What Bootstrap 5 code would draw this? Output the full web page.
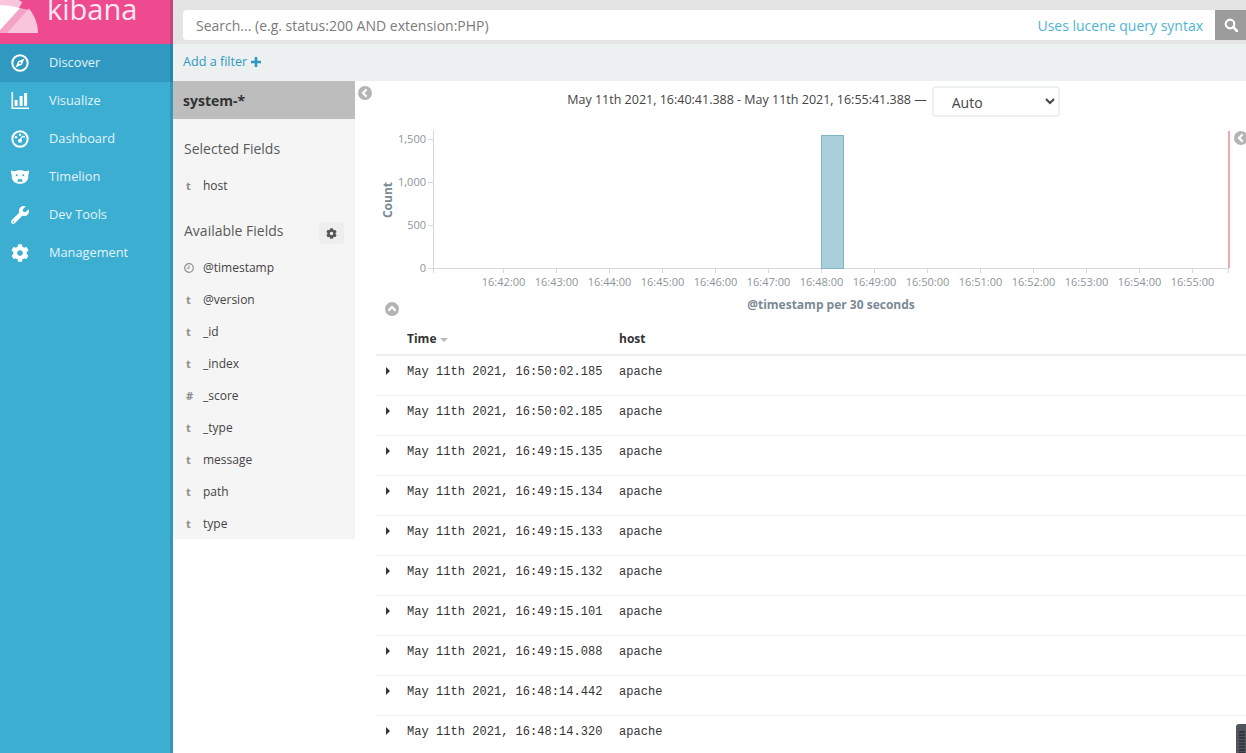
<!DOCTYPE html>
<html lang="en">
<head>
<meta charset="utf-8">
<title>Kibana Discover</title>
<link rel="stylesheet" href="https://cdn.jsdelivr.net/npm/bootstrap@5.3.0/dist/css/bootstrap.min.css">
<style>
html,body{height:753px;overflow:hidden}
body{font-family:"Open Sans",sans-serif;font-size:12px;color:#444;background:#fff}
.shell{height:753px}
.side-nav{width:173px;background:#3caed2;position:relative}
.side-nav::after{content:"";position:absolute;top:0;right:0;bottom:0;width:3px;background:rgba(0,40,60,.16)}
.brand-bar{height:44px;background:#ee4a8f;overflow:hidden;position:relative}
.brand-mark{position:absolute;left:0;top:0}
.brand-name{position:absolute;left:47px;top:-11px;font-size:29px;line-height:40px;color:#fde8f1;font-weight:500}
.nav-entry{height:38px;color:#e2f4fa;font-size:12.8px;padding-left:11px;text-decoration:none}
.nav-entry.on{background:#2f99c1}
.nav-entry svg{width:18px;height:18px;flex:none;margin-right:20px}
.main-area{min-width:0}
.query-bar{height:44px;background:#e4e4e4;padding:10px 0 4px 10px}
.query-field{background:#fff;border-radius:4px 0 0 4px;height:30px;padding:0 12px 0 13px;font-size:14px;color:#7b7b7b}
.query-hint{color:#4fb3d6}
.query-btn{width:31px;height:30px;background:#9c9c9c}
.filter-bar{height:37px;background:#ecf0f1;padding:0 0 1px 10px;color:#2f99c1;font-size:12.6px;gap:4px}
.fields-col{width:182px;flex:none}
.pattern-head{height:38px;background:#bdbdbd;padding-left:10px;font-size:14px;font-weight:700;color:#333}
.fields-box{background:#f5f5f5;height:420px}
.group-title{font-size:14px;color:#5a5a5a;padding-left:11px}
.title-one{height:51px;padding-top:19px}
.title-two{height:50px;padding-right:11px;padding-top:6px}
.gear-btn{width:25px;height:22px;background:#eee;border-radius:4px;color:#555;margin-top:6px}
.field-line{height:32px;padding-left:11px;color:#444}
.type-mark{width:19px;color:#8f8f8f;font-weight:700;font-size:11px;padding-left:2px}
.clock-mark{padding-left:0}
.results-col{min-width:0;position:relative}
.collapse-left{position:absolute;left:3px;top:5px}
.time-row{height:41px;padding:5px 0 0 26px;gap:5px;font-size:12.5px;color:#444}
.time-text{padding-top:5px}
.interval-pick{width:128px;height:31px;border:2px solid #ecf0f1;border-radius:4px;font-size:14px;padding:2px 5px 0 14px;color:#444;background:#fff;font-family:inherit}
.chart-wrap{height:201px;position:relative}
.chart-wrap svg{display:block}
.chart-wrap text{font-family:"Open Sans",sans-serif}
.collapse-up{position:absolute;left:30px;top:180px}
.doc-table{margin:0 0 0 21px;width:870px;font-size:12px;table-layout:fixed;border-collapse:collapse}
.doc-table th{height:32px;padding:0;font-weight:700;color:#333;border-bottom:2px solid #ecf0f1;vertical-align:middle;font-size:12px}
.doc-table td{height:40px;padding:8px 0 0;border-bottom:1px solid #ecf0f1;vertical-align:top;line-height:16px;color:#333}
.col-arrow{width:31px}
.col-time{width:212px}
.mono-cell{font-family:"Liberation Mono",monospace;font-size:12px;letter-spacing:.04px}
.arrow-mark{display:block;margin:3px 0 0 9px}
.sort-mark{display:inline-block;margin-left:4px;border:4px solid transparent;border-top:4px solid #b4bcc2;border-bottom:0;vertical-align:1px}
.corner-widget{position:absolute;right:0;bottom:0;width:10px;height:29px;background:#50545e;border-radius:3px 0 0 0;background-image:repeating-linear-gradient(#50545e 0 1px,#33363d 1px 3px);background-size:6px 100%;background-repeat:no-repeat;background-position:3px 6px}
</style>
</head>
<body>
<svg width="0" height="0" class="position-absolute">
<defs>
<symbol id="i-gear" viewBox="0 0 512 512"><path fill="currentColor" d="M487.4 315.7l-42.6-24.6c4.3-23.2 4.3-47 0-70.2l42.6-24.6c4.9-2.8 7.1-8.6 5.5-14-11.1-35.6-30-67.8-54.7-94.6-3.8-4.1-10-5.1-14.8-2.3L380.8 110c-17.9-15.4-38.5-27.3-60.8-35.1V25.8c0-5.6-3.9-10.5-9.4-11.7-36.7-8.2-74.3-7.8-109.2 0-5.5 1.2-9.4 6.1-9.4 11.7V75c-22.2 7.9-42.8 19.8-60.8 35.1L88.7 85.5c-4.9-2.8-11-1.9-14.8 2.3-24.7 26.7-43.6 58.9-54.7 94.6-1.7 5.4.6 11.2 5.5 14L67.3 221c-4.3 23.2-4.3 47 0 70.2l-42.6 24.6c-4.9 2.8-7.1 8.6-5.5 14 11.1 35.6 30 67.8 54.7 94.6 3.8 4.1 10 5.1 14.8 2.3l42.6-24.6c17.9 15.4 38.5 27.3 60.8 35.1v49.2c0 5.6 3.9 10.5 9.4 11.7 36.7 8.2 74.3 7.8 109.2 0 5.5-1.2 9.4-6.1 9.4-11.7v-49.2c22.2-7.9 42.8-19.8 60.8-35.1l42.6 24.6c4.9 2.8 11 1.9 14.8-2.3 24.7-26.7 43.6-58.9 54.7-94.6 1.5-5.5-.7-11.3-5.6-14.1zM256 336c-44.1 0-80-35.9-80-80s35.9-80 80-80 80 35.9 80 80-35.9 80-80 80z"/></symbol>
<symbol id="i-left" viewBox="0 0 14 14"><circle cx="7" cy="7" r="7" fill="#b4b4b4"/><path d="M8.6 3.4 5 7l3.6 3.6" fill="none" stroke="#fff" stroke-width="2.2"/></symbol>
<symbol id="i-up" viewBox="0 0 14 14"><circle cx="7" cy="7" r="7" fill="#b4b4b4"/><path d="M3.4 8.6 7 5l3.6 3.6" fill="none" stroke="#fff" stroke-width="2.2"/></symbol>
<symbol id="i-arrow" viewBox="0 0 6 8"><path d="M1 0l4 4-4 4z" fill="#333"/></symbol>
</defs>
</svg>
<div class="shell d-flex position-relative">
  <nav class="side-nav d-flex flex-column flex-shrink-0">
    <div class="brand-bar flex-shrink-0">
      <svg class="brand-mark" width="40" height="36" viewBox="0 0 40 36">
        <path d="M0 33V-5A38 38 0 0 1 38 33z" fill="#f9c5dc"/>
        <path d="M19 8 24 -1H32L28 10z" fill="#ee4a8f"/>
        <path d="M20 8 27 11 7 33H0V30z" fill="#f5a3c7"/>
        <path d="M0 5Q10 5 20 8L0 30z" fill="#fff"/>
      </svg>
      <span class="brand-name">kibana</span>
    </div>
    <a class="nav-entry on d-flex align-items-center" href="#">
      <svg viewBox="0 0 18 18" class="text-white"><circle cx="9" cy="9" r="7.7" fill="none" stroke="currentColor" stroke-width="2"/><path d="M13.500 4.500 10.800 10.800 4.500 13.500 7.200 7.200z" fill="currentColor"/><circle cx="9" cy="9" r="1" fill="#2f99c1"/></svg>Discover</a>
    <a class="nav-entry d-flex align-items-center" href="#">
      <svg viewBox="0 0 18 18" class="text-white"><path d="M.5 0h1.6v15.4H18V17H.5z" fill="currentColor"/><path d="M4 8h3v6H4zM9 4h3v10H9zM13.5 1h3v13h-3z" fill="currentColor" transform="translate(-.4 0)"/></svg>Visualize</a>
    <a class="nav-entry d-flex align-items-center" href="#">
      <svg viewBox="0 0 18 18" class="text-white"><circle cx="9" cy="9" r="7.7" fill="none" stroke="currentColor" stroke-width="2"/><circle cx="9" cy="4.8" r="1.2" fill="currentColor"/><circle cx="5" cy="7.2" r="1.2" fill="currentColor"/><circle cx="13" cy="6.8" r="1" fill="currentColor"/><circle cx="9" cy="10.8" r="2" fill="currentColor"/><path d="M9 10 11.8 5.8" stroke="currentColor" stroke-width="1.3"/></svg>Dashboard</a>
    <a class="nav-entry d-flex align-items-center" href="#">
      <svg viewBox="0 0 18 18" class="text-white"><path d="M0 2.2C1.5 3 2.6 3.2 4 3.2 5.8 2.4 7.4 2.2 9 2.2s3.2.2 5 1c1.4 0 2.5-.2 4-1 .2 2-.2 3.6-.8 4.800.4 3.2-.6 6-3 7.6-1.600 1-3.400 1.200-5.200 1.200s-3.600-.2-5.200-1.200c-2.400-1.600-3.400-4.400-3-7.600C.2 5.800-.2 4.200 0 2.200z" fill="currentColor"/><circle cx="5.700" cy="7.300" r="1" fill="#3caed2"/><circle cx="12.300" cy="7.300" r="1" fill="#3caed2"/><path d="M6.300 13.800c.3-2.400 1.300-3.400 2.700-3.400s2.400 1 2.700 3.400z" fill="#3caed2"/><path d="M7.800 10.300h2.400L9 11.800z" fill="#fff"/></svg>Timelion</a>
    <a class="nav-entry d-flex align-items-center" href="#">
      <svg viewBox="0 0 512 512" class="text-white"><path fill="currentColor" d="M507.730 109.100c-2.240-9.030-13.540-12.090-20.120-5.510l-74.360 74.360-67.880-11.310-11.310-67.880 74.360-74.360c6.620-6.620 3.430-17.900-5.660-20.160-47.380-11.740-99.550.91-136.580 37.930-39.640 39.640-50.550 97.100-34.050 147.200L18.740 402.760c-24.990 24.990-24.990 65.510 0 90.500 24.990 24.990 65.510 24.990 90.500 0l213.210-213.210c50.120 16.710 107.470 5.680 147.370-34.220 37.070-37.070 49.700-89.320 37.910-136.730zM64 472c-13.250 0-24-10.750-24-24 0-13.260 10.750-24 24-24s24 10.740 24 24c0 13.250-10.750 24-24 24z"/></svg>Dev Tools</a>
    <a class="nav-entry d-flex align-items-center" href="#">
      <svg class="text-white"><use href="#i-gear"/></svg>Management</a>
  </nav>

  <div class="main-area flex-grow-1 d-flex flex-column">
    <div class="query-bar d-flex flex-shrink-0">
      <div class="query-field flex-grow-1 d-flex align-items-center justify-content-between">
        <span>Search... (e.g. status:200 AND extension:PHP)</span>
        <span class="query-hint">Uses lucene query syntax</span>
      </div>
      <div class="query-btn d-flex align-items-center justify-content-center">
        <svg width="14" height="14" viewBox="0 0 14 14"><circle cx="6" cy="6" r="4.300" fill="none" stroke="#fff" stroke-width="2.200"/><path d="M9.200 9.200 13 13" stroke="#fff" stroke-width="2.600" stroke-linecap="round"/></svg>
      </div>
    </div>
    <div class="filter-bar d-flex align-items-center flex-shrink-0">
      <span>Add a filter</span>
      <svg width="10" height="10" viewBox="0 0 10 10"><path d="M3.700 0h2.600v3.700H10v2.600H6.300V10H3.700V6.300H0V3.700h3.700z" fill="#2f99c1"/></svg>
    </div>
    <div class="d-flex flex-grow-1">
      <aside class="fields-col">
        <div class="pattern-head d-flex align-items-center">system-*</div>
        <div class="fields-box">
          <div class="group-title title-one">Selected Fields</div>
          <div class="field-line d-flex align-items-center"><span class="type-mark">t</span>host</div>
          <div class="group-title title-two d-flex align-items-center justify-content-between">
            <span>Available Fields</span>
            <span class="gear-btn d-flex align-items-center justify-content-center"><svg width="11" height="11"><use href="#i-gear"/></svg></span>
          </div>
          <div class="field-line d-flex align-items-center"><span class="type-mark clock-mark"><svg width="10" height="10" viewBox="0 0 10 10" class="d-block"><circle cx="5" cy="5" r="4.300" fill="none" stroke="#8f8f8f" stroke-width="1.200"/><path d="M5 2.500V5.300H2.800" fill="none" stroke="#8f8f8f"/></svg></span>@timestamp</div>
          <div class="field-line d-flex align-items-center"><span class="type-mark">t</span>@version</div>
          <div class="field-line d-flex align-items-center"><span class="type-mark">t</span>_id</div>
          <div class="field-line d-flex align-items-center"><span class="type-mark">t</span>_index</div>
          <div class="field-line d-flex align-items-center"><span class="type-mark">#</span>_score</div>
          <div class="field-line d-flex align-items-center"><span class="type-mark">t</span>_type</div>
          <div class="field-line d-flex align-items-center"><span class="type-mark">t</span>message</div>
          <div class="field-line d-flex align-items-center"><span class="type-mark">t</span>path</div>
          <div class="field-line d-flex align-items-center"><span class="type-mark">t</span>type</div>
        </div>
      </aside>
      <section class="results-col flex-grow-1">
        <svg class="collapse-left" width="14" height="14"><use href="#i-left"/></svg>
        <div class="time-row d-flex justify-content-center align-items-start">
          <span class="time-text">May 11th 2021, 16:40:41.388 - May 11th 2021, 16:55:41.388 —</span>
          <select class="interval-pick"><option>Auto</option></select>
        </div>
        <div class="chart-wrap">
          <svg width="891" height="201" viewBox="355 122 891 201">
            <g stroke="#d8d8d8" fill="none">
              <path d="M433.500 130V273"/>
              <path d="M428 139.500h5.500M428 182.500h5.500M428 225.500h5.500M428 268.500H1229"/>
              <path d="M503.500 268v5M556.500 268v5M609.500 268v5M662.500 268v5M715.500 268v5M768.500 268v5M821.500 268v5M874.500 268v5M927.500 268v5M980.500 268v5M1033.500 268v5M1086.500 268v5M1139.500 268v5M1192.500 268v5M1228.500 268v5"/>
            </g>
            <g fill="#8d959b" font-size="11">
              <g text-anchor="end">
                <text x="426" y="143">1,500</text>
                <text x="426" y="186">1,000</text>
                <text x="426" y="229">500</text>
                <text x="426" y="272">0</text>
              </g>
              <g text-anchor="middle">
                <text x="503.500" y="286">16:42:00</text>
                <text x="556.500" y="286">16:43:00</text>
                <text x="609.500" y="286">16:44:00</text>
                <text x="662.500" y="286">16:45:00</text>
                <text x="715.500" y="286">16:46:00</text>
                <text x="768.500" y="286">16:47:00</text>
                <text x="821.500" y="286">16:48:00</text>
                <text x="874.500" y="286">16:49:00</text>
                <text x="927.500" y="286">16:50:00</text>
                <text x="980.500" y="286">16:51:00</text>
                <text x="1033.500" y="286">16:52:00</text>
                <text x="1086.500" y="286">16:53:00</text>
                <text x="1139.500" y="286">16:54:00</text>
                <text x="1192.500" y="286">16:55:00</text>
              </g>
            </g>
            <g fill="#7b8a96" font-size="12" font-weight="700" text-anchor="middle">
              <text transform="translate(391.500 200) rotate(-90)">Count</text>
              <text x="831" y="309">@timestamp per 30 seconds</text>
            </g>
            <rect x="821.500" y="135.500" width="22" height="133" fill="#a8cfda" stroke="#7fb5c6"/>
            <rect x="1228" y="131" width="2" height="137" fill="#f0a8ac"/>
            <use href="#i-left" x="1234" y="131" width="14" height="14"/>
          </svg>
          <svg class="collapse-up" width="14" height="14"><use href="#i-up"/></svg>
        </div>
        <table class="doc-table">
          <colgroup><col class="col-arrow"><col class="col-time"><col></colgroup>
          <thead><tr><th></th><th>Time<span class="sort-mark"></span></th><th>host</th></tr></thead>
          <tbody>
            <tr><td><svg class="arrow-mark" width="6" height="8"><use href="#i-arrow"/></svg></td><td class="mono-cell">May 11th 2021, 16:50:02.185</td><td class="mono-cell">apache</td></tr>
            <tr><td><svg class="arrow-mark" width="6" height="8"><use href="#i-arrow"/></svg></td><td class="mono-cell">May 11th 2021, 16:50:02.185</td><td class="mono-cell">apache</td></tr>
            <tr><td><svg class="arrow-mark" width="6" height="8"><use href="#i-arrow"/></svg></td><td class="mono-cell">May 11th 2021, 16:49:15.135</td><td class="mono-cell">apache</td></tr>
            <tr><td><svg class="arrow-mark" width="6" height="8"><use href="#i-arrow"/></svg></td><td class="mono-cell">May 11th 2021, 16:49:15.134</td><td class="mono-cell">apache</td></tr>
            <tr><td><svg class="arrow-mark" width="6" height="8"><use href="#i-arrow"/></svg></td><td class="mono-cell">May 11th 2021, 16:49:15.133</td><td class="mono-cell">apache</td></tr>
            <tr><td><svg class="arrow-mark" width="6" height="8"><use href="#i-arrow"/></svg></td><td class="mono-cell">May 11th 2021, 16:49:15.132</td><td class="mono-cell">apache</td></tr>
            <tr><td><svg class="arrow-mark" width="6" height="8"><use href="#i-arrow"/></svg></td><td class="mono-cell">May 11th 2021, 16:49:15.101</td><td class="mono-cell">apache</td></tr>
            <tr><td><svg class="arrow-mark" width="6" height="8"><use href="#i-arrow"/></svg></td><td class="mono-cell">May 11th 2021, 16:49:15.088</td><td class="mono-cell">apache</td></tr>
            <tr><td><svg class="arrow-mark" width="6" height="8"><use href="#i-arrow"/></svg></td><td class="mono-cell">May 11th 2021, 16:48:14.442</td><td class="mono-cell">apache</td></tr>
            <tr><td><svg class="arrow-mark" width="6" height="8"><use href="#i-arrow"/></svg></td><td class="mono-cell">May 11th 2021, 16:48:14.320</td><td class="mono-cell">apache</td></tr>
          </tbody>
        </table>
      </section>
    </div>
  </div>
  <div class="corner-widget"></div>
</div>
</body>
</html>
